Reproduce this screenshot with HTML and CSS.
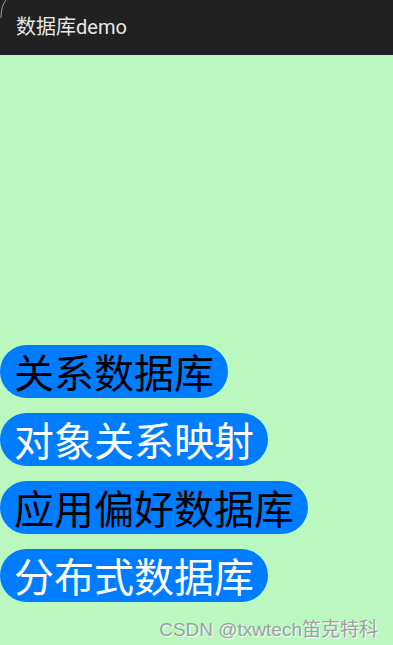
FILE: index.html
```html
<!DOCTYPE html>
<html lang="zh">
<head>
<meta charset="utf-8">
<title>数据库demo</title>
<link rel="stylesheet" href="styles.css">
</head>
<body>
<div class="app">
  <header class="titlebar">
    <svg class="corner" width="8" height="18" viewBox="0 0 8 18"><path d="M6 0 Q1 6 1 18" fill="none" stroke="#9a9a9a" stroke-width="1"/></svg>
    <span class="title">数据库demo</span>
  </header>
  <main class="content">
    <div class="btn dark">关系数据库</div>
    <div class="btn light">对象关系映射</div>
    <div class="btn dark">应用偏好数据库</div>
    <div class="btn light">分布式数据库</div>
  </main>
  <div class="watermark">CSDN @txwtech笛克特科</div>
</div>
</body>
</html>
```
FILE: styles.css
```css
html, body {
  margin: 0;
  padding: 0;
}
body {
  width: 393px;
  height: 645px;
  overflow: hidden;
  font-family: "Noto Sans CJK SC", "Noto Sans", sans-serif;
}
.app {
  position: relative;
  width: 393px;
  height: 645px;
  background: #bbf8c0;
  display: flex;
  flex-direction: column;
}
.titlebar {
  position: relative;
  height: 55px;
  background: #212121;
  display: flex;
  align-items: center;
  padding-left: 16px;
  box-sizing: border-box;
}
.corner {
  position: absolute;
  left: 0;
  top: 0;
}
.title {
  color: #e6e6e6;
  font-family: "Roboto", "Noto Sans CJK SC", sans-serif;
  font-size: 20px;
  line-height: 1;
  margin-top: -1px;
}
.content {
  display: flex;
  flex-direction: column;
  align-items: flex-start;
  gap: 15px;
  padding-top: 290px;
}
.btn {
  height: 53px;
  box-sizing: border-box;
  padding: 0 14px;
  border-radius: 27px;
  background: #007dff;
  font-size: 40px;
  line-height: 53px;
  white-space: nowrap;
}
.btn.dark { color: #000000; }
.btn.light { color: #ffffff; }
.watermark {
  position: absolute;
  right: 15px;
  bottom: 6px;
  font-family: "Liberation Sans", "Noto Sans CJK SC", sans-serif;
  font-size: 19px;
  color: #a0a0a0;
  text-shadow: 1px 1px 1px #ffffff;
  line-height: 1;
}
```
